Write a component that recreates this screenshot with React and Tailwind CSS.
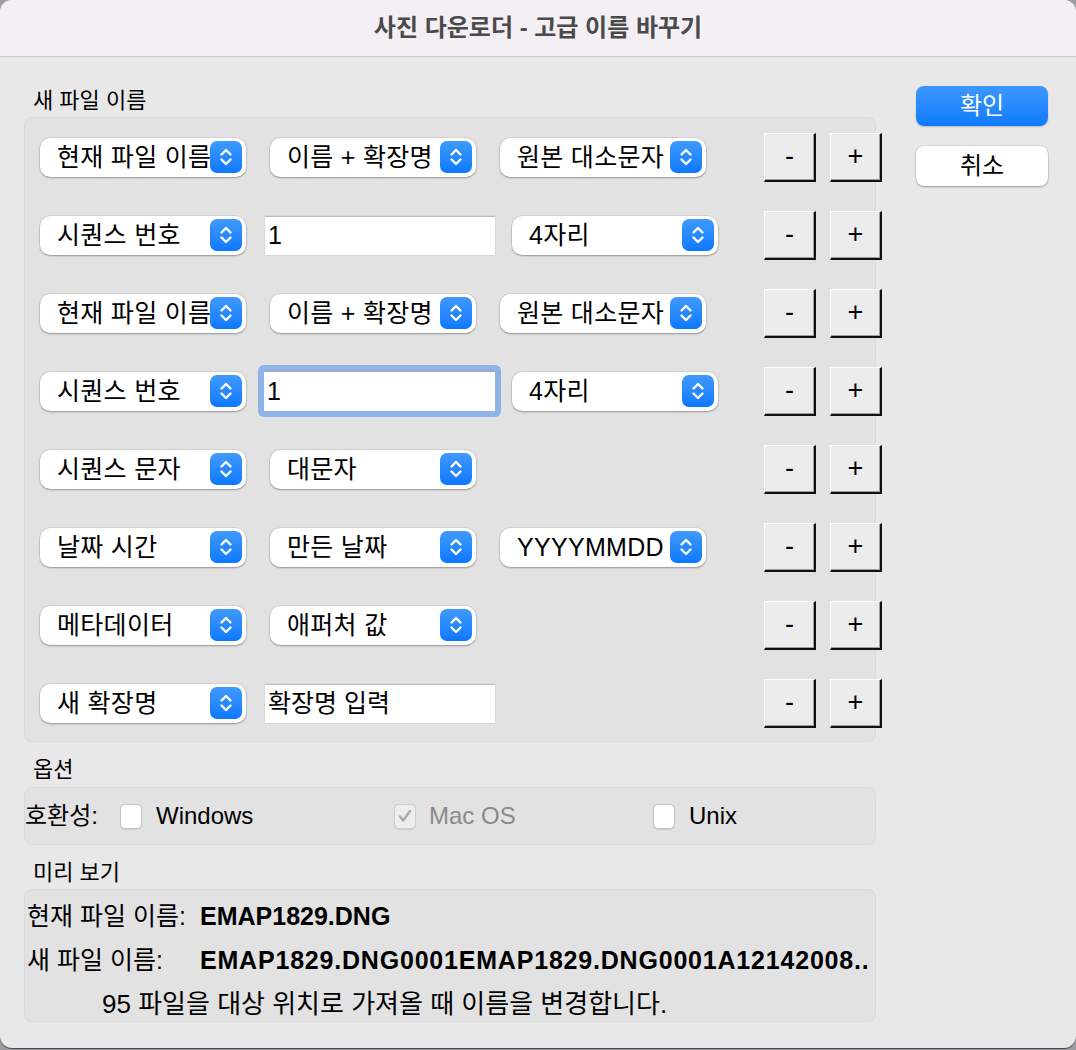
import React from 'react';

function Stepper() {
  return (
    <span className="flex h-[32px] w-[32px] shrink-0 items-center justify-center rounded-[7px] bg-gradient-to-b from-[#3f9afc] to-[#0a78ff]">
      <svg width="16" height="24" viewBox="0 0 16 24" fill="none" stroke="white" strokeWidth="2.4" strokeLinecap="round" strokeLinejoin="round">
        <path d="M3.5 9.5L8 5l4.5 4.5" />
        <path d="M3.5 14.5L8 19l4.5-4.5" />
      </svg>
    </span>
  );
}

function Popup({ label, className = '' }) {
  return (
    <div className={`flex h-[39px] w-[206px] shrink-0 items-center rounded-[10px] bg-white pl-[17px] pr-[4px] shadow-[0_1px_2px_rgba(0,0,0,0.3),0_0_0_0.5px_rgba(0,0,0,0.12)] ${className}`}>
      <span className="flex-1 overflow-hidden whitespace-nowrap text-[25px] leading-[30px] tracking-[0.3px] text-black">{label}</span>
      <Stepper />
    </div>
  );
}

function Field({ value, className = '' }) {
  return (
    <div className={`flex h-[39px] w-[230px] shrink-0 items-center border-t border-[#bdbdbd] bg-white pl-[3px] text-[25px] text-black shadow-[0_0_0_0.5px_rgba(0,0,0,0.08)] ${className}`}>
      {value}
    </div>
  );
}

function FocusField({ value }) {
  return (
    <div className="ml-[12px] shrink-0 rounded-[6px] bg-[#8db3e8] p-[6px]">
      <div className="flex h-[40px] w-[231px] items-center border-t border-[#a8a8a8] bg-white pl-[3px] text-[25px] text-black">
        {value}
      </div>
    </div>
  );
}

function Bevel({ children }) {
  return (
    <button className="flex h-[49px] w-[52px] shrink-0 items-center justify-center border-t border-l border-white border-b-2 border-r-2 border-b-[#111] border-r-[#111] bg-[#ececec] text-[27px] leading-none text-black shadow-[inset_-1px_-1px_0_#a0a0a0]">
      {children}
    </button>
  );
}

function Row({ children }) {
  return (
    <div className="flex h-[50px] shrink-0 items-center">
      <div className="flex w-[724px] shrink-0 items-center">{children}</div>
      <div className="flex shrink-0 gap-[14px]">
        <Bevel>-</Bevel>
        <Bevel>+</Bevel>
      </div>
    </div>
  );
}

function Check({ checked, disabled }) {
  return (
    <span className={`flex h-[25px] w-[22px] shrink-0 items-center justify-center rounded-[5px] border ${disabled ? 'border-[#d0d0d0] bg-[#eeeeee]' : 'border-[#c4c4c4] bg-white'} shadow-[0_0.5px_1px_rgba(0,0,0,0.1)]`}>
      {checked && (
        <svg width="16" height="16" viewBox="0 0 16 16" fill="none" stroke="#a9a9a9" strokeWidth="2.4" strokeLinecap="round" strokeLinejoin="round">
          <path d="M3 8.5l3.2 4L13 3" />
        </svg>
      )}
    </span>
  );
}

export default function App() {
  return (
    <div className="h-[1050px] w-[1076px] bg-[#9b9ca1] font-['Liberation_Sans','Noto_Sans_CJK_KR',sans-serif]">
      <div className="h-[1048px] overflow-hidden rounded-[12px] bg-[#e8e8e8] shadow-[0_1px_0_#4a4a4a]">
        <div className="flex h-[57px] items-center justify-center border-b border-[#cdcdcd] bg-[#f4eff4] text-[24px] font-bold text-[#4a4a4a]">
          사진 다운로더 - 고급 이름 바꾸기
        </div>

        <div className="flex pl-[24px]">
          <div className="w-[852px] shrink-0">
            <div className="pl-[9px] pt-[32px] text-[22px] leading-[23px] text-black">새 파일 이름</div>
            <div className="mt-[5px] flex h-[625px] flex-col gap-[28px] rounded-[8px] border border-[#d9d9d9] bg-[#e2e2e2] pl-[15px] pt-[14px]">
              <Row>
                <Popup label="현재 파일 이름" />
                <Popup label="이름 + 확장명" className="ml-[24px]" />
                <Popup label="원본 대소문자" className="ml-[24px]" />
              </Row>
              <Row>
                <Popup label="시퀀스 번호" />
                <Field value="1" className="ml-[19px]" />
                <Popup label="4자리" className="ml-[17px]" />
              </Row>
              <Row>
                <Popup label="현재 파일 이름" />
                <Popup label="이름 + 확장명" className="ml-[24px]" />
                <Popup label="원본 대소문자" className="ml-[24px]" />
              </Row>
              <Row>
                <Popup label="시퀀스 번호" />
                <FocusField value="1" />
                <Popup label="4자리" className="ml-[11px]" />
              </Row>
              <Row>
                <Popup label="시퀀스 문자" />
                <Popup label="대문자" className="ml-[24px]" />
              </Row>
              <Row>
                <Popup label="날짜 시간" />
                <Popup label="만든 날짜" className="ml-[24px]" />
                <Popup label="YYYYMMDD" className="ml-[24px]" />
              </Row>
              <Row>
                <Popup label="메타데이터" />
                <Popup label="애퍼처 값" className="ml-[24px]" />
              </Row>
              <Row>
                <Popup label="새 확장명" />
                <Field value="확장명 입력" className="ml-[19px]" />
              </Row>
            </div>

            <div className="mt-[16px] pl-[9px] text-[22px] leading-[23px] text-black">옵션</div>
            <div className="mt-[6px] flex h-[58px] items-center rounded-[8px] border border-[#d9d9d9] bg-[#e2e2e2] text-[24px] text-black">
              <span className="w-[95px] whitespace-nowrap">호환성:</span>
              <div className="flex w-[274px] items-center">
                <Check />
                <span className="ml-[14px]">Windows</span>
              </div>
              <div className="flex w-[259px] items-center text-[#8a8a8a]">
                <Check checked disabled />
                <span className="ml-[13px]">Mac OS</span>
              </div>
              <div className="flex items-center">
                <Check />
                <span className="ml-[14px]">Unix</span>
              </div>
            </div>

            <div className="mt-[16px] pl-[9px] text-[22px] leading-[23px] text-black">미리 보기</div>
            <div className="mt-[5px] flex h-[133px] flex-col gap-[18px] rounded-[8px] border border-[#d9d9d9] bg-[#e2e2e2] pl-[2px] pt-[13px] text-[25px] leading-[26px] text-black">
              <div className="flex whitespace-nowrap">
                <span className="w-[173px]">현재 파일 이름:</span>
                <span className="font-bold">EMAP1829.DNG</span>
              </div>
              <div className="flex whitespace-nowrap">
                <span className="w-[173px]">새 파일 이름:</span>
                <span className="font-bold tracking-[0.8px]">EMAP1829.DNG0001EMAP1829.DNG0001A12142008..</span>
              </div>
              <div className="whitespace-nowrap pl-[75px] text-[26px]">95 파일을 대상 위치로 가져올 때 이름을 변경합니다.</div>
            </div>
          </div>

          <div className="ml-[40px] flex flex-col gap-[20px] pt-[29px]">
            <button className="flex h-[40px] w-[132px] items-center justify-center rounded-[8px] bg-gradient-to-b from-[#3c97fb] to-[#0a7aff] text-[24px] text-white shadow-[0_1px_2px_rgba(0,0,0,0.2)]">
              확인
            </button>
            <button className="flex h-[40px] w-[132px] items-center justify-center rounded-[8px] bg-white text-[24px] text-black shadow-[0_1px_2px_rgba(0,0,0,0.3),0_0_0_0.5px_rgba(0,0,0,0.1)]">
              취소
            </button>
          </div>
        </div>
      </div>
    </div>
  );
}
